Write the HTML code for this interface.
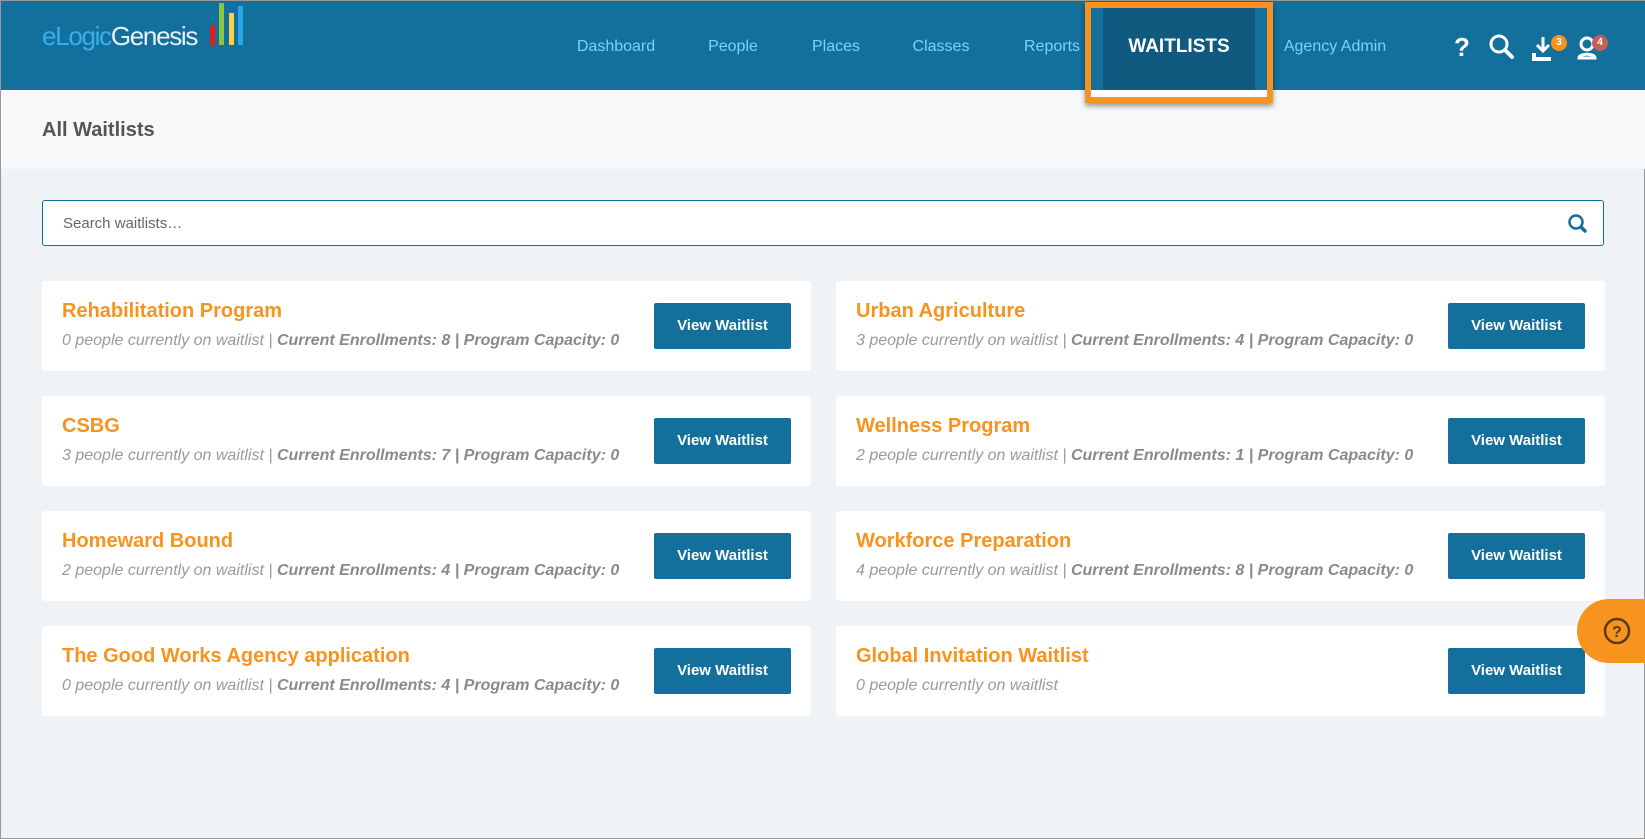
<!DOCTYPE html>
<html><head><meta charset="utf-8"><style>
*{box-sizing:border-box;margin:0;padding:0}
body{width:1645px;height:839px;overflow:hidden;background:#eff3f6;font-family:"Liberation Sans",sans-serif;position:relative;border:1px solid #999}
.hdr{position:absolute;left:0;top:0;width:1645px;height:89px;background:#136f9c}
.logo{position:absolute;left:41px;top:20px;font-size:26px;letter-spacing:-1.3px}
.logo .a{color:#3ab0e8}.logo .b{color:#e6f2f8}
.bar{position:absolute;bottom:0;width:5px}
.nav{position:absolute;top:37px;font-size:16px;color:#7fd0f5;transform:translateX(-50%);white-space:nowrap}
.wl{position:absolute;left:1084px;top:1px;width:188px;height:101px;border:6px solid #f7931e;box-shadow:0 3px 5px rgba(0,0,0,.4);background:#fff}
.wl .in{position:absolute;left:0;top:0;width:176px;height:82px;background:#136f9c}
.wl .in2{position:absolute;left:12px;top:0;width:152px;height:82px;background:#0f5a7e}
.wl span{position:absolute;left:0;width:176px;top:28px;text-align:center;color:#fff;font-weight:bold;font-size:19px}
.sub{position:absolute;left:0;top:89px;width:1645px;height:79px;background:#f7f8fa}
.sub h1{position:absolute;left:41px;top:29px;font-size:20px;color:#555}
.search{position:absolute;left:41px;top:199px;width:1562px;height:46px;background:#fff;border:1px solid #136f9c;border-radius:3px}
.search span{position:absolute;left:20px;top:14px;font-size:15px;color:#666}
.card{position:absolute;width:769px;height:90px;background:#fff;border-radius:3px}
.card h2{position:absolute;left:20px;top:19px;font-size:20px;color:#f7931e;font-weight:bold}
.card p{position:absolute;left:20px;top:51px;font-size:16px;color:#9a9a9a;font-style:italic;white-space:nowrap}
.card p b{color:#8a8a8a}
.btn{position:absolute;left:612px;top:22px;width:137px;height:46px;background:#136f9c;color:#fff;font-weight:bold;font-size:15px;text-align:center;line-height:46px;border-radius:2px}
.help{position:absolute;left:1576px;top:598px;width:70px;height:64px;background:#f7931e;border-radius:32px 0 0 32px}
.badge{position:absolute;width:16px;height:16px;border-radius:8px;font-size:10px;font-weight:bold;color:#fff;text-align:center;line-height:16px}
</style></head><body>
<div class="hdr">
 <div class="logo"><span class="a">eLogic</span><span class="b">Genesis</span></div>
 <div class="bar" style="left:209px;top:24px;height:20px;background:#e31b1b;position:absolute"></div>
 <div class="bar" style="left:218px;top:2px;height:42px;background:#8cc63f;position:absolute"></div>
 <div class="bar" style="left:228px;top:12px;height:32px;background:#f9d142;position:absolute"></div>
 <div class="bar" style="left:237px;top:5px;height:39px;background:#2aa8e6;position:absolute"></div>
 <div class="nav" style="left:615px">Dashboard</div>
 <div class="nav" style="left:732px">People</div>
 <div class="nav" style="left:835px">Places</div>
 <div class="nav" style="left:940px">Classes</div>
 <div class="nav" style="left:1051px">Reports</div>
 <div class="nav" style="left:1334px">Agency Admin</div>
 <div style="position:absolute;left:1453px;top:31px;color:#fff;font-weight:bold;font-size:26px">?</div>
 <svg style="position:absolute;left:1488px;top:33px" width="26" height="26" viewBox="0 0 26 26"><circle cx="10" cy="10" r="8" fill="none" stroke="#fff" stroke-width="3"/><path d="M16 16l7 7" stroke="#fff" stroke-width="4" stroke-linecap="round"/></svg>
 <svg style="position:absolute;left:1530px;top:34px" width="24" height="26" viewBox="0 0 24 26"><path d="M12 2v14M6 10l6 6 6-6" stroke="#fff" stroke-width="3" fill="none"/><path d="M1 18h4v4h15v4H1z" fill="#fff"/></svg>
 <div class="badge" style="left:1550px;top:34px;background:#f7931e">3</div>
 <svg style="position:absolute;left:1575px;top:34px" width="24" height="26" viewBox="0 0 24 26"><circle cx="11" cy="9" r="6" fill="none" stroke="#fff" stroke-width="3"/><path d="M3 23c0-5 16-5 16 0z" fill="none" stroke="#fff" stroke-width="3"/></svg>
 <div class="badge" style="left:1591px;top:34px;background:#c4605a">4</div>
</div>
<div class="sub"><h1>All Waitlists</h1></div>
<div class="wl"><div class="in"></div><div class="in2"></div><span>WAITLISTS</span></div>
<div class="search"><span>Search waitlists…</span>
<svg style="position:absolute;right:14px;top:12px" width="22" height="22" viewBox="0 0 22 22"><circle cx="9" cy="9" r="6.5" fill="none" stroke="#136f9c" stroke-width="2.5"/><path d="M14 14l4 4" stroke="#136f9c" stroke-width="3.5" stroke-linecap="round"/></svg></div>

<div class="card" style="left:41px;top:280px"><h2>Rehabilitation Program</h2><p>0 people currently on waitlist | <b>Current Enrollments: 8 | Program Capacity: 0</b></p><div class="btn">View Waitlist</div></div>
<div class="card" style="left:835px;top:280px"><h2>Urban Agriculture</h2><p>3 people currently on waitlist | <b>Current Enrollments: 4 | Program Capacity: 0</b></p><div class="btn">View Waitlist</div></div>
<div class="card" style="left:41px;top:395px"><h2>CSBG</h2><p>3 people currently on waitlist | <b>Current Enrollments: 7 | Program Capacity: 0</b></p><div class="btn">View Waitlist</div></div>
<div class="card" style="left:835px;top:395px"><h2>Wellness Program</h2><p>2 people currently on waitlist | <b>Current Enrollments: 1 | Program Capacity: 0</b></p><div class="btn">View Waitlist</div></div>
<div class="card" style="left:41px;top:510px"><h2>Homeward Bound</h2><p>2 people currently on waitlist | <b>Current Enrollments: 4 | Program Capacity: 0</b></p><div class="btn">View Waitlist</div></div>
<div class="card" style="left:835px;top:510px"><h2>Workforce Preparation</h2><p>4 people currently on waitlist | <b>Current Enrollments: 8 | Program Capacity: 0</b></p><div class="btn">View Waitlist</div></div>
<div class="card" style="left:41px;top:625px"><h2>The Good Works Agency application</h2><p>0 people currently on waitlist | <b>Current Enrollments: 4 | Program Capacity: 0</b></p><div class="btn">View Waitlist</div></div>
<div class="card" style="left:835px;top:625px"><h2>Global Invitation Waitlist</h2><p>0 people currently on waitlist</p><div class="btn">View Waitlist</div></div>

<div class="help"><svg style="position:absolute;left:26px;top:18px" width="28" height="28" viewBox="0 0 28 28"><circle cx="14" cy="14" r="12" fill="none" stroke="#5a3a10" stroke-width="2.5"/><text x="14" y="20" text-anchor="middle" font-family="Liberation Sans" font-weight="bold" font-size="16" fill="#5a3a10">?</text></svg></div>
</body></html>
